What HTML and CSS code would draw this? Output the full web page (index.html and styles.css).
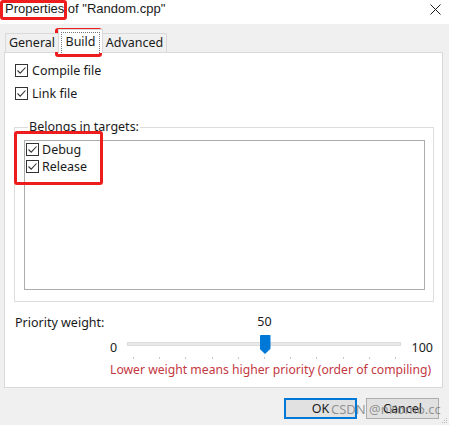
FILE: index.html
```html
<!DOCTYPE html>
<html>
<head>
<meta charset="utf-8">
<link rel="stylesheet" href="styles.css">
</head>
<body>
<div class="window">
  <div class="titlebar">
    <span class="title">Properties of "Random.cpp"</span>
    <svg class="close" width="11" height="11" viewBox="0 0 11 11"><path d="M0.5 0.5L10.5 10.5M10.5 0.5L0.5 10.5" stroke="#1a1a1a" stroke-width="1" fill="none"/></svg>
  </div>
  <div class="client">
    <div class="tabs">
      <div class="tab tab-general">General</div>
      <div class="tab tab-build selected"><span class="focus">Build</span></div>
      <div class="tab tab-adv">Advanced</div>
    </div>
    <div class="panel">
      <div class="chk chk-first"><span class="box"><svg width="11" height="11" viewBox="0 0 11 11"><path d="M1.5 5.5L4.2 8.2L9.5 2.5" stroke="#333" stroke-width="1.1" fill="none"/></svg></span><span>Compile file</span></div>
      <div class="chk chk-second"><span class="box"><svg width="11" height="11" viewBox="0 0 11 11"><path d="M1.5 5.5L4.2 8.2L9.5 2.5" stroke="#333" stroke-width="1.1" fill="none"/></svg></span><span>Link file</span></div>
      <fieldset class="group">
        <legend>Belongs in targets:</legend>
        <div class="list">
          <div class="item"><span class="box"><svg width="11" height="11" viewBox="0 0 11 11"><path d="M1.5 5.5L4.2 8.2L9.5 2.5" stroke="#333" stroke-width="1.1" fill="none"/></svg></span><span>Debug</span></div>
          <div class="item"><span class="box"><svg width="11" height="11" viewBox="0 0 11 11"><path d="M1.5 5.5L4.2 8.2L9.5 2.5" stroke="#333" stroke-width="1.1" fill="none"/></svg></span><span>Release</span></div>
        </div>
      </fieldset>
      <div class="weight-label">Priority weight:</div>
      <div class="slider">
        <span class="min">0</span>
        <div class="track-wrap">
          <div class="track"></div>
          <div class="range">
            <span class="value" style="left:50%">50</span>
            <span class="thumb" style="left:50%"></span>
          </div>
        </div>
        <span class="max">100</span>
        <div class="ticks">
          <i></i><i></i><i></i><i></i><i></i><i></i><i></i><i></i><i></i><i></i><i></i>
        </div>
      </div>
      <div class="hint">Lower weight means higher priority (order of compiling)</div>
    </div>
    <div class="buttons">
      <div class="btn btn-ok">OK</div>
      <div class="btn btn-cancel">Cancel</div>
    </div>
  </div>
  <div class="watermark">CSDN @nKomo.cc</div>
  <div class="mark mark-title"></div>
  <div class="mark mark-tab"></div>
  <div class="mark mark-targets"></div>
  <svg class="grip" width="6" height="6" viewBox="0 0 6 6"><rect x="4" y="0" width="1" height="1" fill="#bbb"/><rect x="2" y="2" width="1" height="1" fill="#bbb"/><rect x="4" y="2" width="1" height="1" fill="#bbb"/><rect x="0" y="4" width="1" height="1" fill="#bbb"/><rect x="2" y="4" width="1" height="1" fill="#bbb"/><rect x="4" y="4" width="1" height="1" fill="#bbb"/></svg>
</div>
</body>
</html>
```

FILE: styles.css
```css
* { box-sizing: border-box; }
html, body { margin: 0; padding: 0; }
body {
  width: 449px;
  height: 425px;
  overflow: hidden;
  background: #f0f0f0;
  font-family: "Noto Sans", "Liberation Sans", sans-serif;
  font-size: 12.5px;
  color: #1a1a1a;
}
.window { position: relative; width: 449px; height: 425px; }

.titlebar {
  height: 24px;
  background: #fff;
  display: flex;
  align-items: flex-start;
  justify-content: space-between;
  padding: 0 8px 0 5px;
}
.title {
  line-height: 18px;
  font-family: "Liberation Sans", "Noto Sans", sans-serif;
  font-size: 13px;
}
.close { margin-top: 4px; }

.client { padding: 0 0 0 4px; }

.tabs {
  display: flex;
  align-items: flex-end;
  height: 24px;
  margin-top: 5px;
  margin-bottom: -1px;
  position: relative;
  z-index: 1;
}
.tab {
  height: 19px;
  margin-bottom: 1px;
  border: 1px solid #d9d9d9;
  border-bottom: none;
  background: #f0f0f0;
  text-align: center;
  line-height: 18px;
}
.tab-general { width: 53px; margin-left: 1px; border-right: none; }
.tab-adv { width: 64px; border-left: none; }
.tab-build {
  width: 45px;
  height: 24px;
  margin-bottom: 0;
  background: #fff;
  padding: 2px 2px 0;
}
.focus {
  display: block;
  height: 21px;
  line-height: 18px;
  border: 1px dotted #777;
  border-bottom: none;
}

.panel {
  width: 439px;
  height: 336px;
  background: #fff;
  border: 1px solid #d9d9d9;
  padding: 0 0 0 10px;
}
.chk, .item {
  display: flex;
  align-items: center;
  height: 13px;
  line-height: 16px;
}
.chk-first { margin-top: 11px; }
.chk-second { margin-top: 10px; }
.box {
  width: 13px;
  height: 13px;
  border: 1px solid #333;
  background: #fff;
  flex: none;
  margin-right: 4px;
  display: flex;
}
.item .box { margin-right: 3px; }

.group {
  width: 420px;
  margin: 20px 0 0 -1px;
  padding: 6px 8px 11px 9px;
  border: 1px solid #dcdcdc;
  min-width: 0;
}
.group legend {
  padding: 0 1px;
  margin-left: 4px;
  line-height: 14px;
}
.list {
  width: 401px;
  height: 150px;
  border: 1px solid #acacac;
  padding: 2px 0 0 1px;
}
.item { height: 13px; margin-bottom: 4px; }

.weight-label {
  margin-top: 13px;
  line-height: 16px;
}

.slider {
  display: grid;
  grid-template-columns: 17px 274px 32px;
  grid-template-rows: 22px 6px;
  margin-left: 95px;
  margin-top: 2px;
}
.min, .max {
  align-self: start;
  margin-top: 7px;
  line-height: 16px;
}
.max { text-align: right; }
.track-wrap { position: relative; }
.track {
  margin-top: 9px;
  height: 4px;
  background: #e7eaea;
  border: 1px solid #dcdcdc;
}
.range {
  position: absolute;
  left: 6px;
  right: 5px;
  top: 0;
  bottom: 0;
}
.value {
  position: absolute;
  top: -19px;
  transform: translateX(-50%);
  line-height: 16px;
}
.thumb {
  position: absolute;
  top: 2px;
  width: 11px;
  height: 19px;
  margin-left: -5px;
  background: #0078d7;
  border-radius: 1px 1px 0 0;
  clip-path: polygon(0 0, 100% 0, 100% 72%, 50% 100%, 0 72%);
}
.ticks {
  grid-column: 2;
  grid-row: 2;
  display: flex;
  justify-content: space-between;
  padding: 2px 5px 0 6px;
}
.ticks i {
  display: block;
  width: 1px;
  height: 2px;
  background: #c8c8c8;
}
.hint {
  margin-left: 95px;
  margin-top: 1px;
  line-height: 16px;
  font-size: 12.2px;
  color: #c4373f;
}

.buttons {
  display: flex;
  justify-content: flex-end;
  gap: 9px;
  padding-right: 10px;
  margin-top: 10px;
}
.btn {
  width: 73px;
  height: 21px;
  background: #e1e1e1;
  border: 1px solid #adadad;
  text-align: center;
  line-height: 19px;
}
.btn-ok { border: 2px solid #0078d7; line-height: 17px; }

.watermark {
  position: absolute;
  left: 331px;
  top: 401px;
  font-size: 13px;
  line-height: 16px;
  color: rgba(120, 120, 120, 0.75);
}
.mark {
  position: absolute;
  border: 3px solid #ee1d1d;
  border-radius: 3px;
}
.mark-title { left: 0; top: 0; width: 67px; height: 20px; }
.mark-tab { left: 55px; top: 28px; width: 47px; height: 29px; }
.mark-targets { left: 14px; top: 131px; width: 89px; height: 54px; }
.grip { position: absolute; right: 1px; bottom: 1px; }
```
